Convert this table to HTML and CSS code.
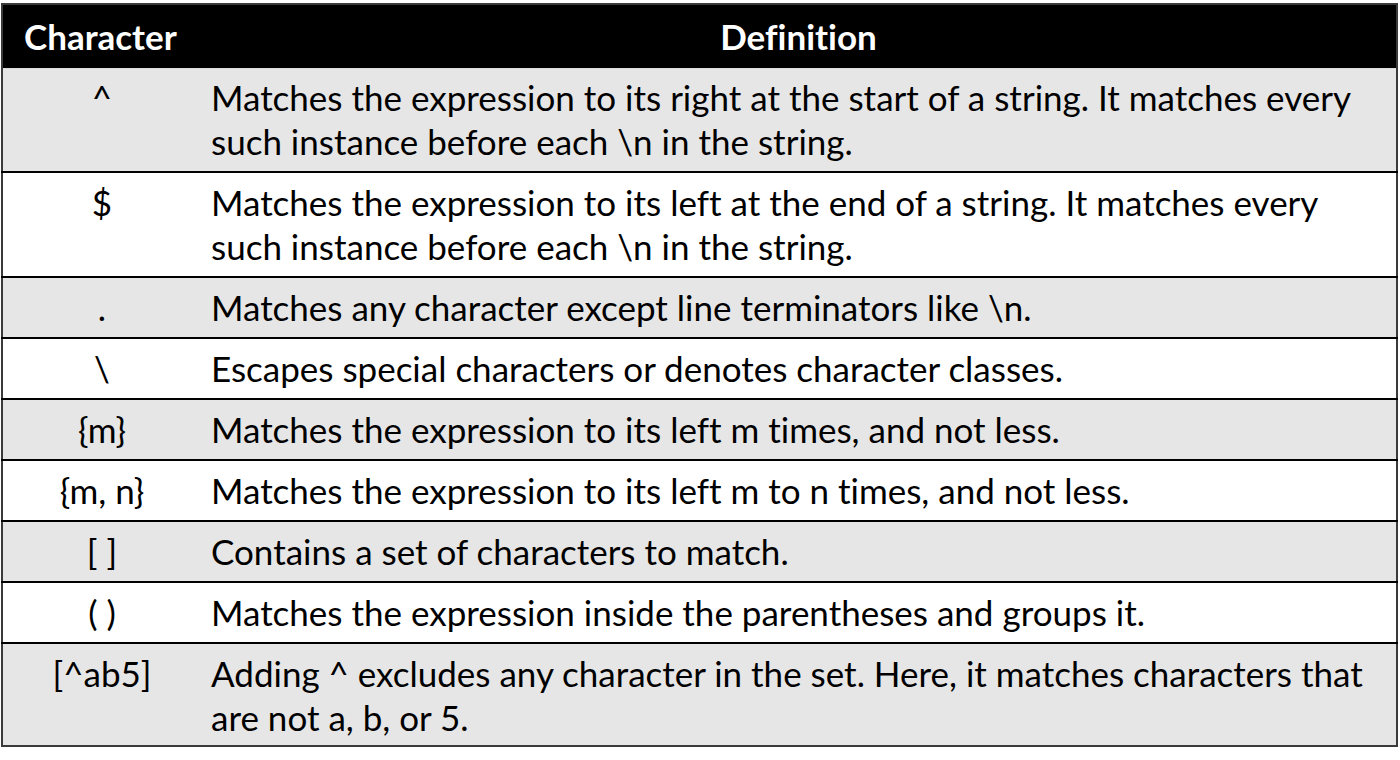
FILE: index.html
```html
<!DOCTYPE html>
<html lang="en-US">
<head>
	<meta charset="utf-8">
	<meta name="viewport" content="width=device-width, initial-scale=1.0">
	<link rel="stylesheet" href="styles.css">
</head>
<body>
	<table class="regex">
		<colgroup>
			<col class="col-char">
			<col class="col-def">
		</colgroup>
		<thead>
			<tr>
				<th class="char">Character</th>
				<th class="def">Definition</th>
			</tr>
		</thead>
		<tbody>
			<tr class="shade">
				<td class="char">^</td>
				<td class="def">Matches the expression to its right at the start of a string. It matches every such instance before each \n in the string.</td>
			</tr>
			<tr>
				<td class="char">$</td>
				<td class="def">Matches the expression to its left at the end of a string. It matches every such instance before each \n in the string.</td>
			</tr>
			<tr class="shade">
				<td class="char">.</td>
				<td class="def">Matches any character except line terminators like \n.</td>
			</tr>
			<tr>
				<td class="char">\</td>
				<td class="def">Escapes special characters or denotes character classes.</td>
			</tr>
			<tr class="shade">
				<td class="char">{m}</td>
				<td class="def">Matches the expression to its left m times, and not less.</td>
			</tr>
			<tr>
				<td class="char">{m, n}</td>
				<td class="def">Matches the expression to its left m to n times, and not less.</td>
			</tr>
			<tr class="shade">
				<td class="char">[ ]</td>
				<td class="def">Contains a set of characters to match.</td>
			</tr>
			<tr>
				<td class="char">( )</td>
				<td class="def">Matches the expression inside the parentheses and groups it.</td>
			</tr>
			<tr class="shade">
				<td class="char">[^ab5]</td>
				<td class="def">Adding ^ excludes any character in the set. Here, it matches characters that are not a, b, or 5.</td>
			</tr>
		</tbody>
	</table>
</body>
</html>
```

FILE: styles.css
```css
body {
	margin: 0;
	background: #fff;
	font-family: Lato, "Open Sans", sans-serif;
	color: #000;
}
.regex {
	margin: 3px 0 0 1px;
	width: 1397px;
	table-layout: fixed;
	border-collapse: collapse;
	border: 2px solid #3a3a3a;
	font-size: 35px;
	line-height: 44px;
	font-variant-ligatures: none;
}
.col-char {
	width: 199px;
}
.regex th {
	background: #000;
	color: #fff;
	font-weight: bold;
	height: 61px;
	padding: 0 0 2px 0;
}
.regex th.char {
	text-align: left;
	padding-left: 21px;
}
.regex th.def {
	text-align: center;
}
.regex td {
	border-top: 2px solid #000;
	padding: 7px 0 8px 0;
	vertical-align: top;
}
.regex td.char {
	text-align: center;
}
.regex td.def {
	padding-left: 10px;
	padding-right: 16px;
}
.regex tbody tr:first-child td {
	border-top: 1px solid #ddd;
	padding: 6px 0 8px 0;
}
.regex tbody tr:first-child td.def {
	padding-left: 10px;
	padding-right: 16px;
}
.regex tbody tr:last-child td {
	padding-bottom: 6px;
}
.shade td {
	background: #e7e6e6;
}
```
